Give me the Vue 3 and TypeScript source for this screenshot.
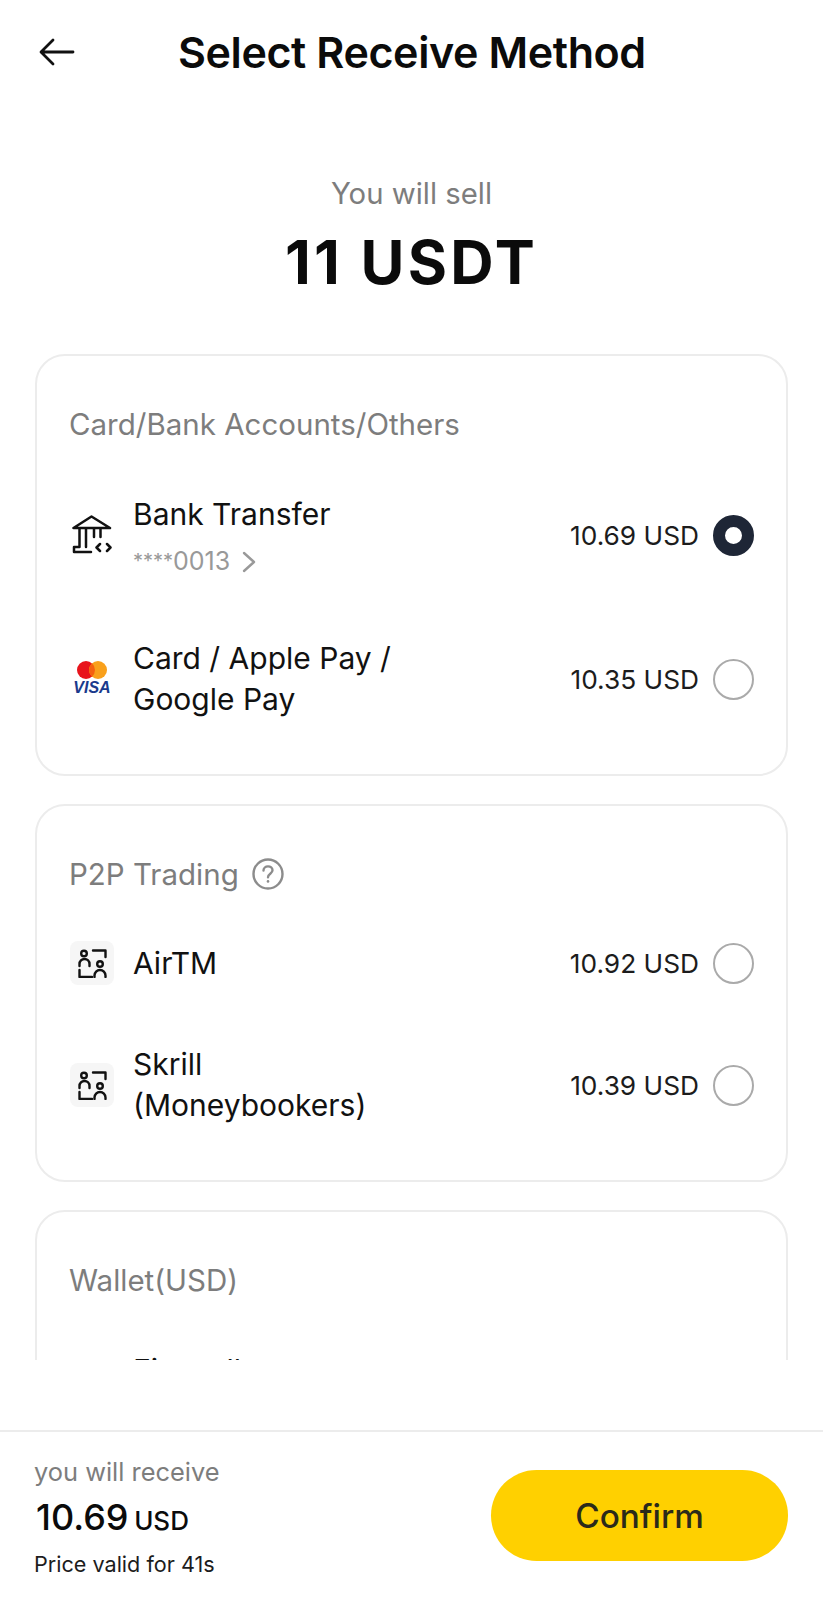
<template>
  <div class="page">
    <div class="top_bar">
      <svg class="back" viewBox="0 0 36 30" width="36" height="30" fill="none" stroke="#111" stroke-width="2.8" stroke-linecap="round" stroke-linejoin="round">
        <path d="M34 15H3M14 3 2 15l12 12" />
      </svg>
      <h1>Select Receive Method</h1>
    </div>

    <div class="sell">
      <div class="sell_label">You will sell</div>
      <div class="sell_amount">11 USDT</div>
    </div>

    <!-- list gets cut off by the footer area -->
    <div class="list">
      <section v-for="group in groups" :key="group.title" class="card">
        <div class="card_title">
          {{ group.title }}
          <svg v-if="group.help" class="help" viewBox="0 0 32 32" width="32" height="32" fill="none" stroke="#8c8c8c" stroke-width="2.4">
            <circle cx="16" cy="16" r="14.5" />
            <path d="M11.5 12.6c0-2.6 2-4.2 4.5-4.2s4.500 1.600 4.500 3.900c0 3.400-4.500 3.500-4.500 7" stroke-linecap="round" />
            <circle cx="16" cy="23.4" r="1.3" fill="#8c8c8c" stroke="none" />
          </svg>
        </div>

        <div v-for="m in group.methods" :key="m.name" class="method">
          <div class="method_icon">
            <svg v-if="m.icon === 'bank'" viewBox="0 0 40 40" width="40" height="40" fill="none" stroke="#111" stroke-width="2.5" stroke-linecap="round" stroke-linejoin="round">
              <path d="M1.500 13 19.500 1.500 38 13H1.500M7.500 13v19M14 13v19M22 13v9M28.500 13v9M7.500 32H2v5h17" />
              <path d="M28 29l-3.500 3.500L28 36M35 29l3.500 3.500L35 36" />
            </svg>
            <div v-else-if="m.icon === 'cards'" class="cards_icon">
              <svg viewBox="0 0 30 18" width="30" height="18">
                <circle cx="9" cy="9" r="9" fill="#e8141c" />
                <circle cx="21" cy="9" r="9" fill="#f9a01b" />
                <path d="M15 2.300a9 9 0 0 1 0 13.400a9 9 0 0 1 0-13.400z" fill="#f5600f" />
              </svg>
              <span class="visa">VISA</span>
            </div>
            <div v-else class="p2p_icon">
              <svg viewBox="0 0 29 29" width="29" height="29" fill="none" stroke="#111" stroke-width="2.400" stroke-linecap="round" stroke-linejoin="round">
                <circle cx="6" cy="4.500" r="2.800" />
                <path d="M1.500 17v-2a5 5 0 0 1 10 0v2" />
                <circle cx="22" cy="15" r="2.800" />
                <path d="M16.500 28v-1.500a5.500 5.500 0 0 1 11 0V28" />
                <path d="M15 1.500h12.500V8M1.500 21v7h12.500" />
              </svg>
            </div>
          </div>

          <div :class="['method_name', { has_sub: m.sub }]">
            <div>{{ m.name }}</div>
            <div v-if="m.sub" class="method_sub">
              <span class="stars">****</span>{{ m.sub }}
              <svg viewBox="0 0 14 22" width="14" height="22" fill="none" stroke="#999" stroke-width="2.400" stroke-linecap="round" stroke-linejoin="round">
                <path d="M2 2l10 9-10 9" />
              </svg>
            </div>
          </div>

          <div class="price">{{ m.price }}</div>
          <div :class="['radio', { on: m.selected }]"></div>
        </div>
      </section>
    </div>

    <div class="footer">
      <div class="summary">
        <div class="receive_label">you will receive</div>
        <div class="receive_amount">{{ selectedAmount }} <span>USD</span></div>
        <div class="valid">Price valid for {{ seconds }}s</div>
      </div>
      <button class="confirm">Confirm</button>
    </div>
  </div>
</template>

<script setup lang="ts">
import { ref } from 'vue';

type Method = {
  name: string;
  icon: string;
  price: string;
  sub?: string;
  selected?: boolean;
};

type Group = { title: string; help?: boolean; methods: Method[] };

const groups: Group[] = [
  {
    title: 'Card/Bank Accounts/Others',
    methods: [
      { name: 'Bank Transfer', icon: 'bank', sub: '0013', price: '10.69 USD', selected: true },
      { name: 'Card / Apple Pay / Google Pay', icon: 'cards', price: '10.35 USD' },
    ],
  },
  {
    title: 'P2P Trading',
    help: true,
    methods: [
      { name: 'AirTM', icon: 'p2p', price: '10.92 USD' },
      { name: 'Skrill (Moneybookers)', icon: 'p2p', price: '10.39 USD' },
    ],
  },
  {
    title: 'Wallet(USD)',
    methods: [{ name: 'Fiatwallet\n(USD)', icon: 'p2p', price: '' }],
  },
];

const selectedAmount = ref('10.69');
const seconds = ref(41);
</script>

<style>
body {
  background: #fff;
}
</style>

<style scoped>
.page {
  height: 1600px;
  display: flex;
  flex-direction: column;
  overflow: hidden;
  background: #fff;
  color: #111;
  font-family: Inter, "Noto Sans", sans-serif;
}

.top_bar {
  display: flex;
  align-items: center;
  height: 104px;
  padding-left: 39px;
  flex-shrink: 0;
}

.back {
  margin-right: 103px;
}

h1 {
  margin: 0;
  font-size: 43px;
  font-weight: 600;
  letter-spacing: -0.4px;
  color: #0b0b0b;
}

.sell {
  text-align: center;
  padding-top: 72px;
  height: 250px;
  box-sizing: border-box;
  flex-shrink: 0;
}

.sell_label {
  font-size: 29.3px;
  line-height: 36px;
  color: #7d7d7d;
}

.sell_amount {
  margin-top: 16px;
  font-size: 60px;
  line-height: 68px;
  font-weight: 700;
  letter-spacing: 3.2px;
  color: #0b0b0b;
}

.list {
  height: 1006px;
  flex-shrink: 0;
  overflow: hidden;
  padding: 0 35px;
  display: flex;
  flex-direction: column;
  gap: 28px;
}

.card {
  flex-shrink: 0;
  border: 2px solid #ececec;
  border-radius: 30px;
  padding: 50px 32px 54px 32px;
}

.card:last-child .method {
  padding-top: 3px;
}

.card_title {
  display: flex;
  align-items: center;
  gap: 13px;
  height: 36px;
  margin-bottom: 49px;
  font-size: 29.5px;
  color: #7d7d7d;
}

.method {
  display: flex;
  align-items: center;
  margin-bottom: 59px;
}

.method:last-child {
  margin-bottom: 0;
}

.method_icon {
  width: 46px;
  margin-right: 18px;
  flex-shrink: 0;
  display: flex;
  justify-content: center;
}

.cards_icon {
  display: flex;
  flex-direction: column;
  align-items: center;
}

.visa {
  font-family: "Liberation Sans", sans-serif;
  font-size: 16px;
  line-height: 18px;
  font-weight: 700;
  font-style: italic;
  color: #1a3a8c;
}

.p2p_icon {
  width: 44px;
  height: 44px;
  border-radius: 8px;
  background: #f6f6f6;
  display: flex;
  align-items: center;
  justify-content: center;
}

.method_name {
  width: 300px;
  font-size: 30px;
  line-height: 41px;
  color: #111;
  white-space: pre-line;
}

.method_name.has_sub {
  margin-top: 3px;
  margin-bottom: -3px;
}

.method_sub {
  display: flex;
  align-items: center;
  margin-top: 6px;
  font-size: 25px;
  color: #999;
  gap: 0;
}

.stars {
  font-size: 20px;
}

.method_sub svg {
  margin-left: 12px;
}

.price {
  margin-left: auto;
  margin-right: 14px;
  font-size: 26.300px;
  color: #1c1c1c;
  white-space: nowrap;
}

.radio {
  width: 41px;
  height: 41px;
  box-sizing: border-box;
  flex-shrink: 0;
  border: 2px solid #aaa;
  border-radius: 50%;
}

.radio.on {
  border: 12.500px solid #1e2636;
  background: #fff;
}

.footer {
  flex: 1;
  border-top: 2px solid #ececec;
  margin-top: 70px;
  padding: 25px 35px 0 34px;
  display: flex;
  justify-content: space-between;
  align-items: flex-start;
}

.receive_label {
  font-size: 25.400px;
  line-height: 30px;
  color: #7d7d7d;
}

.receive_amount {
  margin-top: 8px;
  margin-left: 2px;
  font-size: 36px;
  line-height: 44px;
  font-weight: 500;
  color: #0b0b0b;
}

.receive_amount span {
  margin-left: -4px;
  font-size: 26px;
}

.valid {
  margin-top: 7px;
  font-size: 21.600px;
  line-height: 28px;
  color: #1c1c1c;
}

.confirm {
  width: 297px;
  height: 91px;
  margin-top: 13px;
  border: none;
  border-radius: 46px;
  background: #ffd000;
  color: #2b2a1a;
  font-family: inherit;
  font-size: 33.300px;
  font-weight: 500;
}
</style>
